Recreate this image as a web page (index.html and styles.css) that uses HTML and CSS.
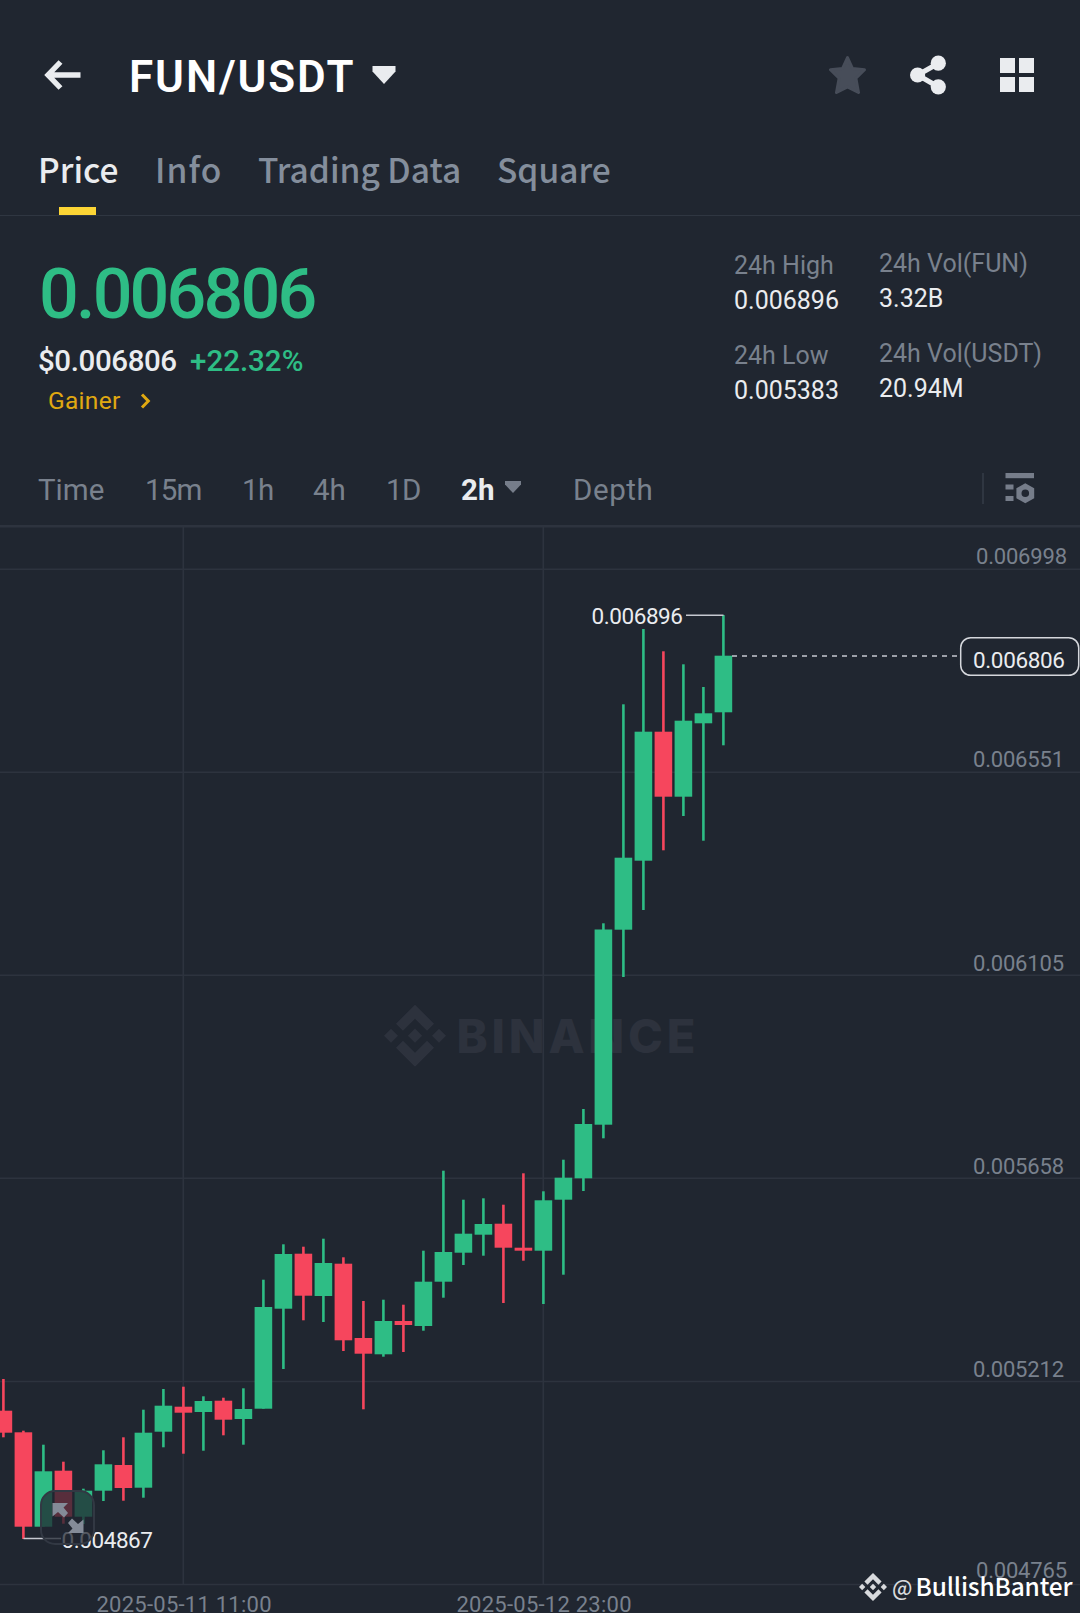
FILE: index.html
```html
<!DOCTYPE html>
<html lang="en">
<head>
    <meta charset="UTF-8">
    <meta name="viewport" content="width=device-width, initial-scale=1.0">
    <title>FUN/USDT</title>
    <link rel="stylesheet" href="styles.css">
</head>
<body>
    <header class="topbar">
        <svg class="back" width="38" height="32" viewBox="0 0 38 32">
            <path d="M16.5 3 L4 16 L16.5 29 M4.5 16 H36.5" fill="none" stroke="#eaecef" stroke-width="5.4"/>
        </svg>
        <h1>FUN/USDT</h1>
        <svg class="caret" width="24" height="18" viewBox="0 0 24 18">
            <path d="M0.5 0 H23.5 V5.5 L12 18 L0.5 5.5 Z" fill="#eaecef"/>
        </svg>
        <div class="actions">
            <svg width="38" height="40" viewBox="0 0 38 40">
                <path d="M18.5 2.5 L23.5 13.5 L35.5 14.8 L26.9 23.3 L29.5 37.5 L18.5 31.8 L7.5 37.5 L10.1 23.3 L1.5 14.8 L13.5 13.5 Z" fill="#474d59" stroke="#474d59" stroke-width="3" stroke-linejoin="round"/>
            </svg>
            <svg class="share" width="36" height="40" viewBox="0 0 36 40">
                <path d="M28.5 8.3 L7.7 20 L28.5 32" fill="none" stroke="#eaecef" stroke-width="5"/>
                <circle cx="28.3" cy="8.2" r="7.6" fill="#eaecef"/>
                <circle cx="7.6" cy="20" r="7.6" fill="#eaecef"/>
                <circle cx="28.3" cy="31.8" r="7.6" fill="#eaecef"/>
            </svg>
            <svg class="tiles" width="34" height="34" viewBox="0 0 34 34" fill="#eaecef">
                <rect width="15" height="15"/>
                <rect x="19" width="15" height="15"/>
                <rect y="19" width="15" height="15"/>
                <rect x="19" y="19" width="15" height="15"/>
            </svg>
        </div>
    </header>

    <nav class="tabs">
        <a class="tab active t-price">Price</a>
        <a class="tab t-info">Info</a>
        <a class="tab t-data">Trading Data</a>
        <a class="tab t-square">Square</a>
    </nav>

    <section class="summary">
        <div class="quote">
            <div class="last-price">0.006806</div>
            <div class="change">
                <span class="fiat">$0.006806</span>
                <span class="percent">+22.32%</span>
            </div>
            <div class="tag">
                <span>Gainer</span>
                <svg width="11" height="16" viewBox="0 0 11 16">
                    <path d="M2 1.5 L8.3 8 L2 14.5" fill="none" stroke="#e0a911" stroke-width="3"/>
                </svg>
            </div>
        </div>
        <div class="stats left-stats">
            <div class="stat"><label>24h High</label><b>0.006896</b></div>
            <div class="stat"><label>24h Low</label><b>0.005383</b></div>
        </div>
        <div class="stats right-stats">
            <div class="stat"><label class="vol">24h Vol(FUN)</label><b>3.32B</b></div>
            <div class="stat"><label class="vol">24h Vol(USDT)</label><b>20.94M</b></div>
        </div>
    </section>

    <nav class="intervals">
        <span class="i-time">Time</span>
        <span class="i-15m">15m</span>
        <span class="i-1h">1h</span>
        <span class="i-4h">4h</span>
        <span class="i-1d">1D</span>
        <span class="i-2h current">2h
            <svg width="16" height="12" viewBox="0 0 16 12"><path d="M0 0 H16 V3.5 L8 12 L0 3.5 Z" fill="#767d8a"/></svg>
        </span>
        <span class="i-depth">Depth</span>
        <div class="chart-settings">
            <svg width="30" height="31" viewBox="0 0 30 31" fill="#767d8a">
                <rect x="0.5" y="0" width="28.5" height="5.2"/>
                <rect x="0.5" y="11.5" width="8" height="5"/>
                <rect x="0.5" y="23" width="8" height="5"/>
                <path fill-rule="evenodd" d="M20.3 10.3 L29.2 15.2 V25.2 L20.3 30.3 L11.4 25.2 V15.2 Z M20.3 16.5 A3.8 3.8 0 1 0 20.3 24.1 A3.8 3.8 0 1 0 20.3 16.5 Z"/>
            </svg>
        </div>
    </nav>

    <section class="chart">
        <svg width="1080" height="1088" viewBox="0 525 1080 1088">
            <defs>
                <symbol id="logo" viewBox="0 0 126.6 126.6">
                    <path d="M38.7 53.2 L63.3 28.6 L87.9 53.2 L102.2 38.9 L63.3 0 L24.4 38.9 Z"/>
                    <path d="M0 63.3 L14.3 49 L28.6 63.3 L14.3 77.6 Z"/>
                    <path d="M38.7 73.4 L63.3 98 L87.9 73.4 L102.2 87.7 L63.3 126.6 L24.4 87.7 Z"/>
                    <path d="M98 63.3 L112.3 49 L126.6 63.3 L112.3 77.6 Z"/>
                    <path d="M77.8 63.3 L63.3 48.8 L48.8 63.3 L63.3 77.8 Z"/>
                </symbol>
            </defs>

            <g class="watermark">
                <use href="#logo" x="384" y="1004.7" width="62" height="62"/>
                <text x="456.5" y="1052.7" textLength="239">BINANCE</text>
            </g>

            <path class="grid top" d="M0 526.3 H1080"/>
            <path class="grid" d="M0 569.3 H1080 M0 772.2 H1080 M0 975.3 H1080 M0 1178.3 H1080 M0 1381.5 H1080 M0 1584.5 H1080"/>
            <path class="grid" d="M183.3 526 V1584 M543.3 526 V1584"/>

            <g class="axis">
                <text x="976" y="563.7" textLength="91">0.006998</text>
                <text x="973" y="766.9" textLength="91">0.006551</text>
                <text x="973" y="970.7" textLength="91">0.006105</text>
                <text x="973" y="1173.6" textLength="91">0.005658</text>
                <text x="973" y="1376.8" textLength="91">0.005212</text>
                <text x="976" y="1578" textLength="91">0.004765</text>
                <text x="96.5" y="1612.2" textLength="175">2025-05-11 11:00</text>
                <text x="456.5" y="1612.2" textLength="175">2025-05-12 23:00</text>
            </g>

            <g id="candles"></g>

            <path class="leader" d="M686 615.3 H723.5 M23.5 1538.6 H61"/>
            <path class="leader" d="M732 656 H958" stroke-dasharray="5 5"/>
            <rect class="price-box" x="960.7" y="637.7" width="118" height="37.6" rx="10"/>
            <g class="marks">
                <text x="591.5" y="623.6" textLength="91.5">0.006896</text>
                <text x="973" y="667.6" textLength="92">0.006806</text>
                <text x="61.5" y="1547.8" textLength="91.5">0.004867</text>
            </g>

            <g class="credit">
                <use href="#logo" x="859" y="1573" width="28" height="28"/>
                <text class="at" x="892" y="1595.5" textLength="20">@</text>
                <text x="915.5" y="1596" textLength="157">BullishBanter</text>
            </g>
        </svg>
        <div class="expand">
            <svg width="32" height="32" viewBox="0 0 32 32" fill="#848b98">
                <path d="M0.5 1 H16 L11.5 5.5 L16 11 L12 15.5 L6 10 L0.5 14.5 Z"/>
                <path d="M31.5 31 H16 L20.5 26.5 L16 21 L20 16.5 L26 22 L31.5 17.5 Z"/>
            </svg>
        </div>
    </section>

    <script>
        // high, body top, body bottom, low, direction
        const candles = [
            [1379, 1410.7, 1432.7, 1437.3, 'down'],
            [1430.7, 1432.3, 1526.7, 1539, 'down'],
            [1444.7, 1471.3, 1526.7, 1526.7, 'up'],
            [1461.7, 1470.7, 1516.7, 1523.7, 'down'],
            [1488.7, 1490.7, 1516.7, 1524, 'up'],
            [1450.3, 1464.3, 1490.7, 1501, 'up'],
            [1437.3, 1465, 1488, 1500.7, 'down'],
            [1409.7, 1432.7, 1487.7, 1497.7, 'up'],
            [1389, 1405.7, 1431.7, 1447.3, 'up'],
            [1386.7, 1406.7, 1412.7, 1453.7, 'down'],
            [1396.3, 1401, 1412, 1450.7, 'up'],
            [1397.7, 1400.7, 1419.7, 1435.3, 'down'],
            [1388.3, 1409, 1419, 1444.7, 'up'],
            [1279.7, 1307, 1408.7, 1408.7, 'up'],
            [1244.3, 1254, 1308.7, 1369, 'up'],
            [1246.7, 1253.7, 1295.7, 1320.3, 'down'],
            [1238.7, 1263, 1296, 1322, 'up'],
            [1257.3, 1263.7, 1340.3, 1351, 'down'],
            [1301, 1338, 1353.7, 1409.3, 'down'],
            [1299.7, 1321, 1354.3, 1356.7, 'up'],
            [1304.7, 1321, 1325, 1352, 'down'],
            [1250.7, 1281.7, 1326, 1330.7, 'up'],
            [1170.7, 1252, 1281.7, 1297.7, 'up'],
            [1199.7, 1233.7, 1252.7, 1265, 'up'],
            [1198.3, 1224, 1234.7, 1255.7, 'up'],
            [1204.7, 1223.7, 1247.7, 1303, 'down'],
            [1173.3, 1247.7, 1250.7, 1260.7, 'down'],
            [1191.3, 1200.3, 1250.7, 1304, 'up'],
            [1159.7, 1177.7, 1199.7, 1274.7, 'up'],
            [1109, 1124, 1178.3, 1191, 'up'],
            [923.3, 929.5, 1124.7, 1138.3, 'up'],
            [704.3, 857.7, 929.7, 977, 'up'],
            [629, 731.7, 860.7, 910, 'up'],
            [651.3, 731.7, 796.7, 850.3, 'down'],
            [664.3, 720.7, 796.7, 816, 'up'],
            [687, 713.3, 723.3, 840.7, 'up'],
            [615, 655.7, 712.3, 745.3, 'up']
        ];

        let out = '';
        candles.forEach(([high, top, bottom, low, dir], i) => {
            const x = 3.4 + i * 20;
            out += `<g class="${dir}">
                <rect x="${x - 1.3}" y="${high}" width="2.6" height="${low - high}"/>
                <rect x="${x - 8.8}" y="${top}" width="17.6" height="${bottom - top}"/>
            </g>`;
        });
        document.getElementById('candles').innerHTML = out;
    </script>
</body>
</html>
```
FILE: styles.css
```css
* {
    box-sizing: border-box;
}
body {
    margin: 0;
    width: 1080px;
    height: 1613px;
    overflow: hidden;
    background-color: #202630;
    color: #eaecef;
    font-family: Roboto, "Liberation Sans", sans-serif;
}
svg {
    display: block;
    flex: none;
}

/* Top bar */
.topbar {
    display: flex;
    align-items: center;
    height: 151px;
    padding: 0 46px 2px 44px;
}
h1 {
    margin: 4px 0 0 47px;
    width: 229px;
    font-size: 44px;
    font-weight: 600;
    line-height: 52px;
    letter-spacing: 1.9px;
    color: #ffffff;
    white-space: nowrap;
}
.caret {
    margin: 2px 0 2px 14px;
}
.actions {
    display: flex;
    align-items: center;
    margin-left: auto;
}
.share {
    margin-left: 43px;
}
.tiles {
    margin-left: 54px;
}

/* Tabs */
.tabs {
    display: flex;
    height: 65px;
    border-bottom: 1px solid #2f3641;
    font-family: "Noto Sans CJK SC", "Noto Sans", sans-serif;
}
.tab {
    position: relative;
    font-size: 33.5px;
    font-weight: 500;
    line-height: 35px;
    color: #848e9c;
    white-space: nowrap;
}
.tab.active {
    color: #eaecef;
}
.tab.active::after {
    content: "";
    position: absolute;
    left: 21px;
    bottom: 0;
    width: 37px;
    height: 8px;
    background-color: #fcd535;
}
.t-price {
    margin-left: 38px;
    width: 117px;
}
.t-info {
    width: 103px;
    letter-spacing: 1.1px;
}
.t-data {
    width: 239px;
}

/* Price summary */
.summary {
    display: flex;
    height: 244px;
}
.quote {
    width: 734px;
    padding: 43px 0 0 38px;
}
.last-price {
    padding-left: 1px;
    font-size: 70px;
    font-weight: 500;
    line-height: 70px;
    letter-spacing: -2.8px;
    color: #2ebd85;
}
.change {
    display: flex;
    margin-top: 12px;
    font-size: 29.5px;
    font-weight: 500;
    line-height: 40px;
}
.fiat {
    width: 152px;
    letter-spacing: -0.4px;
}
.percent {
    color: #2ebd85;
}
.tag {
    display: flex;
    align-items: center;
    gap: 19px;
    padding-left: 10px;
    font-size: 24.5px;
    line-height: 40px;
    letter-spacing: 0.3px;
    color: #e0a911;
}
.stats {
    width: 145px;
    padding-top: 32px;
}
.right-stats {
    width: 190px;
    padding-top: 30px;
}
.stat {
    height: 90px;
}
.stat label,
.stat b {
    display: block;
    font-size: 25px;
    line-height: 35px;
    font-weight: 400;
    white-space: nowrap;
}
.stat label {
    color: #79818d;
}

/* Chart intervals */
.intervals {
    display: flex;
    align-items: center;
    height: 65px;
    padding: 0 45px 6px 38px;
    font-size: 29.5px;
    line-height: 40px;
    color: #79818d;
}
.i-time {
    width: 107px;
}
.i-15m {
    width: 97px;
    letter-spacing: -0.8px;
}
.i-1h {
    width: 71px;
    letter-spacing: -0.5px;
}
.i-4h {
    width: 73px;
}
.i-1d {
    width: 75px;
    letter-spacing: -0.5px;
}
.i-2h {
    display: flex;
    gap: 11px;
    width: 112px;
}
.i-2h svg {
    margin-top: 11px;
}
.i-depth {
    letter-spacing: 0.6px;
}
.current {
    font-weight: 700;
    color: #eaecef;
}
.chart-settings {
    margin: -2px 0 0 auto;
    padding-left: 21px;
    border-left: 2px solid #2f3641;
}

/* Chart */
.chart {
    position: relative;
    height: 1088px;
}
.grid {
    fill: none;
    stroke: #2d333e;
    stroke-width: 1.6;
}
.grid.top {
    stroke-width: 2.5;
}
.watermark {
    fill: #2d323d;
    font-family: Inter, sans-serif;
    font-size: 47px;
    font-weight: 800;
}
.axis {
    fill: #79818d;
    font-size: 22px;
}
.marks {
    fill: #eaecef;
    font-size: 22.5px;
}
.up {
    fill: #2ebd85;
}
.down {
    fill: #f6465d;
}
.leader {
    fill: none;
    stroke: #c5c8d0;
    stroke-width: 1.5;
}
.price-box {
    fill: #202630;
    stroke: #d5d7dc;
    stroke-width: 1.5;
}
.credit {
    fill: #ffffff;
    font-family: "Noto Sans CJK SC", "Noto Sans", sans-serif;
    font-size: 24.5px;
    font-weight: 500;
}
.credit use,
.credit .at {
    fill: #d8dadd;
}
.credit .at {
    font-size: 21px;
}
.expand {
    position: absolute;
    left: 40px;
    top: 965px;
    display: flex;
    align-items: center;
    justify-content: center;
    width: 55px;
    height: 55px;
    border: 2px solid #323843;
    border-radius: 15px;
    background-color: rgba(32, 38, 48, 0.74);
}
```
